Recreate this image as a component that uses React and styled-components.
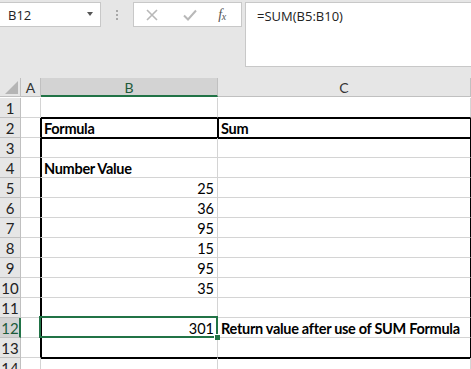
import React from "react";
import styled, { createGlobalStyle } from "styled-components";

const Global = createGlobalStyle`
  html, body { margin: 0; padding: 0; background: #ffffff; }
  body { font-family: Lato, "Liberation Sans", sans-serif; overflow: hidden; }
`;

const GREEN = "#217346";
const GRID = "#d4d4d4";
const HEADER_LINE = "#c0c0c0";

const Page = styled.div`
  width: 471px;
  height: 369px;
  overflow: hidden;
  background: #ffffff;
`;

const TopBar = styled.div`
  height: 78px;
  background: #e6e6e6;
  display: flex;
  align-items: flex-start;
  padding-top: 2px;
  box-sizing: border-box;
`;

const NameBox = styled.div`
  width: 101px;
  height: 25px;
  box-sizing: border-box;
  background: #ffffff;
  border: 1px solid #c8c8c8;
  border-left: none;
  display: flex;
  align-items: center;
  justify-content: space-between;
  padding: 0 7px 0 8px;
  font-family: "Open Sans", "Noto Sans", sans-serif;
  font-size: 13px;
  color: #222;
`;

const Caret = styled.span`
  width: 0;
  height: 0;
  border-left: 3.5px solid transparent;
  border-right: 3.5px solid transparent;
  border-top: 4px solid #555;
  margin-top: -2px;
`;

const Grip = styled.div`
  width: 32px;
  height: 25px;
  display: flex;
  flex-direction: column;
  align-items: center;
  justify-content: center;
  gap: 2px;
`;

const GripDot = styled.span`
  width: 2px;
  height: 2px;
  background: #a8a8a8;
`;

const FxButtons = styled.div`
  width: 109px;
  height: 25px;
  box-sizing: border-box;
  background: #ffffff;
  border: 1px solid #c8c8c8;
  display: flex;
  align-items: center;
  padding-left: 11px;
`;

const IconSlot = styled.span`
  width: ${(p) => p.$w}px;
  display: flex;
  align-items: center;
  justify-content: center;
`;

const FxText = styled.span`
  font-family: "Liberation Serif", "DejaVu Serif", serif;
  font-style: italic;
  font-size: 14px;
  color: #555;
  letter-spacing: -0.5px;
  & sub {
    font-size: 10px;
    vertical-align: -1px;
  }
`;

const FormulaInput = styled.div`
  flex: 1;
  margin-left: 3px;
  height: 65px;
  box-sizing: border-box;
  background: #ffffff;
  border: 1px solid #c8c8c8;
  border-right: none;
  padding: 4px 0 0 11px;
  font-family: "Open Sans", "Noto Sans", sans-serif;
  font-size: 13px;
  color: #222;
`;

const Sheet = styled.div`
  display: grid;
  grid-template-columns: 21px 20px 177px 253px;
  grid-auto-rows: 20px;
`;

const Corner = styled.div`
  height: 19px;
  box-sizing: border-box;
  background: #e6e6e6;
  border-right: 1px solid ${HEADER_LINE};
  border-bottom: 1px solid ${HEADER_LINE};
  position: relative;
`;

const CornerTriangle = styled.span`
  position: absolute;
  right: 2px;
  bottom: 2px;
  width: 0;
  height: 0;
  border-left: 13px solid transparent;
  border-bottom: 13px solid #b5b5b5;
`;

const ColHeader = styled.div`
  height: 19px;
  box-sizing: border-box;
  background: ${(p) => (p.$active ? "#d3d3d3" : "#e6e6e6")};
  border-right: 1px solid ${HEADER_LINE};
  border-bottom: ${(p) => (p.$active ? `2px solid ${GREEN}` : `1px solid ${HEADER_LINE}`)};
  display: flex;
  align-items: center;
  justify-content: center;
  font-size: 14px;
  color: ${(p) => (p.$active ? "#1e5a3a" : "#333")};
  padding-top: ${(p) => (p.$active ? "1px" : "0")};
`;

const RowHeader = styled.div`
  box-sizing: border-box;
  background: ${(p) => (p.$active ? "#d3d3d3" : "#e6e6e6")};
  border-bottom: 1px solid ${HEADER_LINE};
  border-right: ${(p) => (p.$active ? `2px solid ${GREEN}` : `1px solid ${HEADER_LINE}`)};
  display: flex;
  align-items: center;
  justify-content: center;
  font-size: 15px;
  color: ${(p) => (p.$active ? "#1e5a3a" : "#222")};
  padding-top: 1px;
  padding-left: ${(p) => (p.$active ? "1px" : "0")};
`;

const Cell = styled.div`
  position: relative;
  box-sizing: border-box;
  border-right: 1px solid ${(p) => (p.$r ? "#000" : GRID)};
  border-bottom: 1px solid ${(p) => (p.$b ? "#000" : GRID)};
  box-shadow: ${(p) =>
    [p.$r ? "1px 0 0 #000" : null, p.$b ? "0 1px 0 #000" : null]
      .filter(Boolean)
      .join(", ") || "none"};
  display: flex;
  align-items: center;
  justify-content: ${(p) => (p.$num ? "flex-end" : "flex-start")};
  padding: 1px ${(p) => (p.$num ? "3px" : "0")} 0 ${(p) => (p.$num ? "0" : "3px")};
  font-size: 14.5px;
  letter-spacing: ${(p) => (p.$bold ? "-0.3px" : "0")};
  font-weight: ${(p) => (p.$bold ? 700 : 400)};
  color: #000;
  white-space: nowrap;
  overflow: visible;
`;

const Selection = styled.span`
  position: absolute;
  left: -2px;
  top: -2px;
  right: -1px;
  bottom: -1px;
  border: 2px solid ${GREEN};
  pointer-events: none;
  z-index: 2;
`;

const FillHandle = styled.span`
  position: absolute;
  right: -4px;
  bottom: -4px;
  width: 5px;
  height: 5px;
  background: ${GREEN};
  border-left: 1px solid #fff;
  border-top: 1px solid #fff;
`;

const CellText = styled.span`
  position: relative;
  z-index: 1;
`;

const data = {
  2: { B: { t: "Formula", bold: true }, C: { t: "Sum", bold: true } },
  4: { B: { t: "Number Value", bold: true } },
  5: { B: { t: "25", num: true } },
  6: { B: { t: "36", num: true } },
  7: { B: { t: "95", num: true } },
  8: { B: { t: "15", num: true } },
  9: { B: { t: "95", num: true } },
  10: { B: { t: "35", num: true } },
  12: {
    B: { t: "301", num: true },
    C: { t: "Return value after use of SUM Formula", bold: true },
  },
};

const rows = Array.from({ length: 14 }, (_, i) => i + 1);
const cols = ["A", "B", "C"];

function borders(row, col) {
  const inBox = row >= 2 && row <= 13;
  const r =
    (col === "A" && inBox) ||
    (col === "B" && row === 2) ||
    (col === "C" && inBox);
  const b =
    (col === "B" || col === "C") && (row === 1 || row === 2 || row === 13);
  return { r, b };
}

const XIcon = () => (
  <svg width="12" height="12" viewBox="0 0 12 12">
    <path d="M1 1 L11 11 M11 1 L1 11" stroke="#b8b8b8" strokeWidth="1.6" fill="none" />
  </svg>
);

const CheckIcon = () => (
  <svg width="14" height="12" viewBox="0 0 14 12">
    <path d="M1 6.5 L5 10.5 L13 1.5" stroke="#b8b8b8" strokeWidth="2" fill="none" />
  </svg>
);

export default function App() {
  return (
    <Page>
      <Global />
      <TopBar>
        <NameBox>
          <span>B12</span>
          <Caret />
        </NameBox>
        <Grip>
          <GripDot />
          <GripDot />
          <GripDot />
        </Grip>
        <FxButtons>
          <IconSlot $w={14}>
            <XIcon />
          </IconSlot>
          <IconSlot $w={24} />
          <IconSlot $w={14}>
            <CheckIcon />
          </IconSlot>
          <IconSlot $w={17} />
          <IconSlot $w={16}>
            <FxText>
              f<sub>x</sub>
            </FxText>
          </IconSlot>
        </FxButtons>
        <FormulaInput>=SUM(B5:B10)</FormulaInput>
      </TopBar>
      <Sheet>
        <Corner>
          <CornerTriangle />
        </Corner>
        {cols.map((c) => (
          <ColHeader key={c} $active={c === "B"}>
            {c}
          </ColHeader>
        ))}
        {rows.map((row) => (
          <React.Fragment key={row}>
            <RowHeader $active={row === 12}>{row}</RowHeader>
            {cols.map((col) => {
              const d = (data[row] && data[row][col]) || {};
              const { r, b } = borders(row, col);
              const selected = row === 12 && col === "B";
              return (
                <Cell key={col} $r={r} $b={b} $num={d.num} $bold={d.bold}>
                  {d.t && <CellText>{d.t}</CellText>}
                  {selected && (
                    <Selection>
                      <FillHandle />
                    </Selection>
                  )}
                </Cell>
              );
            })}
          </React.Fragment>
        ))}
      </Sheet>
    </Page>
  );
}
